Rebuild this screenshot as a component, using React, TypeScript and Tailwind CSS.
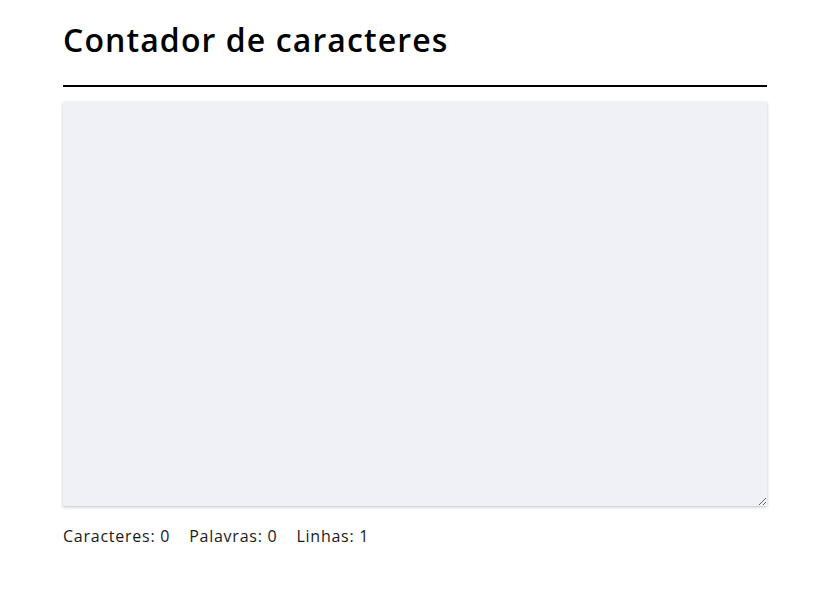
import React, { useState } from "react";

export default function App() {
  const [text, setText] = useState("");
  const chars = text.length;
  const words = text.trim() === "" ? 0 : text.trim().split(/\s+/).length;
  const lines = text.split("\n").length;
  return (
    <div className="min-h-screen bg-white" style={{ fontFamily: '"Open Sans", "Noto Sans", sans-serif' }}>
      <div className="ml-[63px] w-[704px] pt-[16px]">
        <h1 className="text-[32px] leading-[48px] font-semibold text-black tracking-[1.1px]">Contador de caracteres</h1>
        <div className="mt-[21px] h-[2px] bg-black" />
        <textarea
          value={text}
          onChange={(e) => setText(e.target.value)}
          className="mt-[15px] block w-[704px] h-[404px] bg-[#f0f1f6] shadow-[0_1px_3px_rgba(0,0,0,0.25)] outline-none p-2 resize"
        />
        <div className="mt-[19px] flex gap-[19px] text-[16px] leading-[22px] tracking-[0.75px] text-[#1a1a1a]">
          <span>Caracteres: {chars}</span>
          <span>Palavras: {words}</span>
          <span>Linhas: {lines}</span>
        </div>
      </div>
    </div>
  );
}
